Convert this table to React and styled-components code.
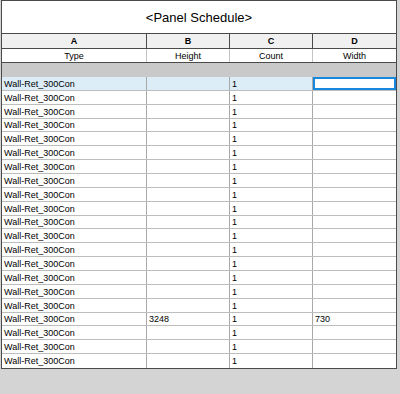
import styled, { createGlobalStyle } from 'styled-components';

const GlobalStyle = createGlobalStyle`
  html, body {
    margin: 0;
    padding: 0;
    background: #d4d4d4;
    font-family: "Liberation Sans", Arial, sans-serif;
  }
`;

const COLS = '145px 83px 83px 83px';
const ROW_PITCH = 13.86;

const rows = Array.from({ length: 21 }, (_, i) => ({
  type: 'Wall-Ret_300Con',
  height: i === 17 ? '3248' : '',
  count: '1',
  width: i === 17 ? '730' : '',
}));

const Sheet = styled.div`
  width: 396px;
  margin-left: 1px;
  box-sizing: border-box;
  border: 1px solid #4a4a4a;
  background: #fff;
`;

const Title = styled.div`
  height: 33px;
  border-bottom: 1px solid #4a4a4a;
  display: flex;
  align-items: center;
  justify-content: center;
  font-size: 13px;
  color: #000;
  padding-top: 1px;
  box-sizing: border-box;
`;

const HeadRow = styled.div`
  display: grid;
  grid-template-columns: ${COLS};
  height: ${(p) => p.$h}px;
  box-sizing: border-box;
  border-bottom: 1px solid #4a4a4a;
  background: ${(p) => p.$bg};
`;

const HeadCell = styled.div`
  box-sizing: border-box;
  border-right: ${(p) => (p.$last ? 'none' : `1px solid ${p.$line}`)};
  display: flex;
  align-items: center;
  justify-content: center;
  font-size: 9px;
  font-weight: ${(p) => (p.$bold ? 700 : 400)};
  color: #000;
`;

const Band = styled.div`
  height: 14px;
  background: #c9c9c9;
`;

const Row = styled.div`
  display: grid;
  grid-template-columns: ${COLS};
  height: ${(p) => p.$h}px;
  box-sizing: border-box;
  border-bottom: ${(p) => (p.$last ? 'none' : '1px solid #bdbdbd')};
  background: ${(p) => (p.$active ? '#dcedf8' : '#fff')};
`;

const Cell = styled.div`
  box-sizing: border-box;
  border-right: ${(p) => (p.$last ? 'none' : '1px solid #a8a8a8')};
  padding-left: 2px;
  display: flex;
  align-items: center;
  font-size: 9px;
  color: #000;
  white-space: nowrap;
  overflow: hidden;
  background: ${(p) => (p.$selected ? '#fff' : 'transparent')};
  box-shadow: ${(p) => (p.$selected ? 'inset 0 0 0 2px #1689de' : 'none')};
`;

const heads = [
  ['A', 'Type'],
  ['B', 'Height'],
  ['C', 'Count'],
  ['D', 'Width'],
];

export default function App() {
  return (
    <>
      <GlobalStyle />
      <Sheet>
        <Title>&lt;Panel Schedule&gt;</Title>
        <HeadRow $h={15} $bg="#f0f0f0">
          {heads.map(([l], i) => (
            <HeadCell key={l} $bold $line="#4a4a4a" $last={i === 3}>
              {l}
            </HeadCell>
          ))}
        </HeadRow>
        <HeadRow $h={14} $bg="#fff">
          {heads.map(([l, name], i) => (
            <HeadCell key={l} $line="#c4c4c4" $last={i === 3}>
              {name}
            </HeadCell>
          ))}
        </HeadRow>
        <Band />
        {rows.map((r, i) => {
          const h = Math.round((i + 1) * ROW_PITCH) - Math.round(i * ROW_PITCH);
          return (
            <Row key={i} $h={h} $active={i === 0} $last={i === rows.length - 1}>
              <Cell>{r.type}</Cell>
              <Cell>{r.height}</Cell>
              <Cell>{r.count}</Cell>
              <Cell $last $selected={i === 0}>{r.width}</Cell>
            </Row>
          );
        })}
      </Sheet>
    </>
  );
}
